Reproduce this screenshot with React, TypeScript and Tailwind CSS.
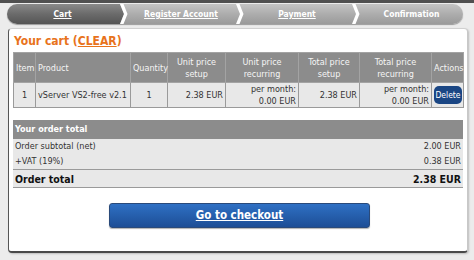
import React from "react";

const FONT = "font-[family-name:DejaVu_Sans_Condensed,DejaVu_Sans,sans-serif]";

function Sep({ from, to, id }: { from: "dark" | "light"; to: "dark" | "light"; id: string }) {
  const stops = {
    dark: ["#8a8a8a", "#6b6b6b", "#555555"],
    light: ["#c4c4c4", "#adadad", "#9a9a9a"],
  };
  return (
    <svg width="10" height="20" viewBox="0 0 10 20" className="block shrink-0">
      <defs>
        <linearGradient id={id + "a"} x1="0" y1="0" x2="0" y2="1">
          <stop offset="0" stopColor={stops[from][0]} />
          <stop offset="0.5" stopColor={stops[from][1]} />
          <stop offset="1" stopColor={stops[from][2]} />
        </linearGradient>
        <linearGradient id={id + "b"} x1="0" y1="0" x2="0" y2="1">
          <stop offset="0" stopColor={stops[to][0]} />
          <stop offset="0.5" stopColor={stops[to][1]} />
          <stop offset="1" stopColor={stops[to][2]} />
        </linearGradient>
      </defs>
      <rect x="0" y="0" width="10" height="20" fill={`url(#${id}b)`} />
      <polygon points="0,0 2,0 6,10 2,20 0,20" fill={`url(#${id}a)`} />
      <polygon points="2,0 5.5,0 9.5,10 5.5,20 2,20 6,10" fill="#ffffff" />
    </svg>
  );
}

export default function App() {
  const th = "bg-[#8c8c8c] text-[#f5f5f5] font-normal border border-[#a3a3a3] leading-[12px] px-[2px] align-middle";
  const td = "bg-[#e8e8e8] text-[#333] border border-[#9a9a9a] leading-[12px] px-[2px] align-middle";
  return (
    <div className={`${FONT} w-[474px] h-[260px] bg-[#ececec] overflow-hidden`}>
      <div className="h-[3px] bg-[#505050]" />
      <div className="mt-[1px] ml-[7px] w-[456px] h-[20px] flex rounded-[10px] overflow-hidden shadow-[0_1px_1px_rgba(0,0,0,0.35)] text-[8.5px] font-bold text-white">
        <div className="w-[111px] flex items-center justify-center bg-gradient-to-b from-[#8a8a8a] via-[#6b6b6b] to-[#555555]">
          <span className="underline">Cart</span>
        </div>
        <Sep from="dark" to="light" id="s1" />
        <div className="w-[106px] flex items-center justify-center bg-gradient-to-b from-[#c4c4c4] via-[#adadad] to-[#9a9a9a]">
          <span className="underline">Register Account</span>
        </div>
        <Sep from="light" to="light" id="s2" />
        <div className="w-[106px] flex items-center justify-center bg-gradient-to-b from-[#c4c4c4] via-[#adadad] to-[#9a9a9a]">
          <span className="underline">Payment</span>
        </div>
        <Sep from="light" to="light" id="s3" />
        <div className="flex-1 flex items-center justify-center bg-gradient-to-b from-[#c4c4c4] via-[#adadad] to-[#9a9a9a]">
          <span>Confirmation</span>
        </div>
      </div>

      <div className="mt-[4px] ml-[8px] w-[460px] h-[225px] bg-white rounded-[4px] border-l border-b-2 border-t border-r border-l-[#555] border-b-[#4a4a4a] border-t-[#d0d0d0] border-r-[#c8c8c8] shadow-[1px_1px_2px_rgba(0,0,0,0.2)] pl-[4px] pr-[4px] pt-[3px]">
        <div className="h-[18px] leading-[18px] text-[12px] font-bold text-[#e8731c] pl-[1px]">
          Your cart (<span className="underline">CLEAR</span>)
        </div>
        <table className="mt-[2px] w-[450px] table-fixed border-collapse text-[9px]">
          <colgroup>
            <col className="w-[22px]" />
            <col className="w-[95px]" />
            <col className="w-[37px]" />
            <col className="w-[58px]" />
            <col className="w-[73px]" />
            <col className="w-[61px]" />
            <col className="w-[72px]" />
            <col className="w-[32px]" />
          </colgroup>
          <thead>
            <tr className="h-[30px]">
              <th className={`${th} text-left`}>Item</th>
              <th className={`${th} text-left`}>Product</th>
              <th className={`${th} text-center`}>Quantity</th>
              <th className={`${th} text-center`}>Unit price<br />setup</th>
              <th className={`${th} text-center`}>Unit price<br />recurring</th>
              <th className={`${th} text-center`}>Total price<br />setup</th>
              <th className={`${th} text-center`}>Total price<br />recurring</th>
              <th className={`${th} text-center`}>Actions</th>
            </tr>
          </thead>
          <tbody>
            <tr className="h-[25px]">
              <td className={`${td} text-center`}>1</td>
              <td className={`${td} text-left whitespace-nowrap`}>vServer VS2-free v2.1</td>
              <td className={`${td} text-center`}>1</td>
              <td className={`${td} text-right`}>2.38 EUR</td>
              <td className={`${td} text-right`}>per month:<br />0.00 EUR</td>
              <td className={`${td} text-right`}>2.38 EUR</td>
              <td className={`${td} text-right`}>per month:<br />0.00 EUR</td>
              <td className={`${td} text-center px-0`}>
                <span className="inline-block bg-[#1a4684] text-white rounded-[5px] px-[1px] h-[18px] leading-[18px] text-[8.5px] w-[28px] text-center">Delete</span>
              </td>
            </tr>
          </tbody>
        </table>

        <div className="mt-[12px] w-[450px] text-[9px] bg-[#e8e8e8] border-b border-[#9a9a9a]">
          <div className="h-[19px] leading-[19px] bg-[#8c8c8c] text-white font-bold px-[2px]">Your order total</div>
          <div className="h-[15px] leading-[15px] flex justify-between px-[2px] text-[#333]">
            <span>Order subtotal (net)</span>
            <span>2.00 EUR</span>
          </div>
          <div className="h-[15px] leading-[15px] flex justify-between px-[2px] text-[#333]">
            <span>+VAT (19%)</span>
            <span>0.38 EUR</span>
          </div>
          <div className="h-[18px] leading-[18px] flex justify-between px-[2px] border-t border-[#9a9a9a] text-[10.5px] font-bold text-[#111]">
            <span>Order total</span>
            <span>2.38 EUR</span>
          </div>
        </div>

        <div className="mt-[15px] ml-[96px] w-[261px] h-[25px] rounded-[3px] border border-[#2a4a7a] bg-gradient-to-b from-[#2f70c4] to-[#1d4e96] flex items-center justify-center shadow-[0_1px_1px_rgba(0,0,0,0.3)]">
          <span className="text-white font-bold text-[11.5px] underline">Go to checkout</span>
        </div>
      </div>
    </div>
  );
}
